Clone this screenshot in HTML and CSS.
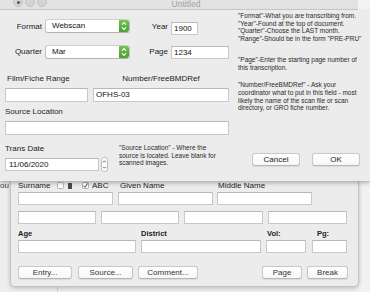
FILE: index.html
```html
<!DOCTYPE html>
<html>
<head>
<meta charset="utf-8">
<title>Untitled</title>
<link rel="stylesheet" href="styles.css">
</head>
<body>
<div class="screen">
  <div class="topbar">
    <div class="titlebar">
      <div class="lights">
        <span class="light"><span class="dot"></span></span>
        <span class="light"></span>
        <span class="light"></span>
      </div>
      <div class="title">Untitled</div>
    </div>
    <div class="topgap"></div>
  </div>

  <div class="sheet">
    <div class="sheet-top">
      <div class="form">
        <div class="row row-a">
          <span class="lbl lbl-r w42">Format</span>
          <div class="popup">
            <span class="popup-text">Webscan</span>
            <span class="popup-btn"><svg width="10" height="14" viewBox="0 0 10 14"><path d="M3 5.6 L5 3.6 L7 5.6 M3 8.4 L5 10.4 L7 8.4" fill="none" stroke="#fff" stroke-width="1.1"/></svg></span>
          </div>
          <span class="lbl lbl-r w38">Year</span>
          <div class="field f-year">1900</div>
        </div>
        <div class="row row-b">
          <span class="lbl lbl-r w42">Quarter</span>
          <div class="popup">
            <span class="popup-text">Mar</span>
            <span class="popup-btn"><svg width="10" height="14" viewBox="0 0 10 14"><path d="M3 5.6 L5 3.6 L7 5.6 M3 8.4 L5 10.4 L7 8.4" fill="none" stroke="#fff" stroke-width="1.1"/></svg></span>
          </div>
          <span class="lbl lbl-r w38">Page</span>
          <div class="field f-page">1234</div>
        </div>
        <div class="row row-clabels">
          <span class="lbl c-film">Film/Fiche Range</span>
          <span class="lbl c-num">Number/FreeBMDRef</span>
        </div>
        <div class="row row-cfields">
          <div class="field f-film"></div>
          <div class="field f-num">OFHS-03</div>
        </div>
        <div class="row row-dlabel">
          <span class="lbl">Source Location</span>
        </div>
        <div class="row row-dfield">
          <div class="field f-source"></div>
        </div>
      </div>
      <div class="help">
        <p class="help-p">"Format"-What you are transcribing from.<br>"Year"-Found at the top of document.<br>"Quarter"-Choose the LAST month.<br>"Range"-Should be in the form "PRE-PRU"</p>
        <p class="help-p help-p2">"Page"-Enter the starting page number of<br>this transcription.</p>
        <p class="help-p help-p3">"Number/FreeBMDRef" - Ask your<br>coordinator what to put in this field - most<br>likely the name of the scan file or scan<br>directory, or GRO fiche number.</p>
      </div>
    </div>
    <div class="sheet-bottom">
      <div class="date-block">
        <div class="lbl date-lbl">Trans Date</div>
        <div class="date-row">
          <div class="field f-date">11/06/2020</div>
          <div class="stepper"><svg width="7" height="15" viewBox="0 0 7 15"><path d="M2 5.3 L3.5 3.8 L5 5.3 M2 9.7 L3.5 11.2 L5 9.7" fill="none" stroke="#555" stroke-width="0.9"/></svg></div>
        </div>
      </div>
      <p class="help2">"Source Location" - Where the<br>source is located. Leave blank for<br>scanned images.</p>
      <div class="sheet-buttons">
        <button class="btn btn-sheet">Cancel</button>
        <button class="btn btn-sheet">OK</button>
      </div>
    </div>
  </div>

  <div class="lower">
    <div class="back-left"><span class="back-label">ou</span></div>
    <div class="panel">
      <div class="prow prow-names">
        <div class="pcell w95 surname-cell">
          <span class="plbl">Surname</span>
          <span class="cb cb1"></span>
          <span class="sq"></span>
          <span class="cb cb2"><svg width="7" height="7" viewBox="0 0 7 7"><path d="M1.3 3.7 L2.9 5.3 L5.8 1.3" fill="none" stroke="#333" stroke-width="0.9"/></svg></span>
          <span class="plbl abc">ABC</span>
        </div>
        <div class="pcell w95"><span class="plbl given">Given Name</span></div>
        <div class="pcell w95"><span class="plbl middle">Middle Name</span></div>
      </div>
      <div class="prow prow-f1">
        <div class="field pf w95"></div>
        <div class="field pf w95"></div>
        <div class="field pf w95"></div>
      </div>
      <div class="prow prow-f2">
        <div class="field pf w78"></div>
        <div class="field pf w78"></div>
        <div class="field pf w79"></div>
        <div class="field pf w79"></div>
      </div>
      <div class="prow prow-f3">
        <div class="pcol col-age"><span class="blbl">Age</span><div class="field pf"></div></div>
        <div class="pcol col-district"><span class="blbl">District</span><div class="field pf"></div></div>
        <div class="pcol col-vol"><span class="blbl vol-l">Vol:</span><div class="field pf"></div></div>
        <div class="pcol col-pg"><span class="blbl pg-l">Pg:</span><div class="field pf"></div></div>
      </div>
      <div class="prow prow-btns">
        <button class="btn pbtn w54">Entry...</button>
        <button class="btn pbtn w55">Source...</button>
        <button class="btn pbtn w60">Comment...</button>
        <span class="spacer"></span>
        <button class="btn pbtn w40">Page</button>
        <button class="btn pbtn w41">Break</button>
      </div>
    </div>
    <div class="back-right"></div>
  </div>
</div>
</body>
</html>
```

FILE: styles.css
```css
* { box-sizing: border-box; }

html, body {
  margin: 0;
  padding: 0;
}

body {
  width: 370px;
  height: 292px;
  overflow: hidden;
  font-family: "Liberation Sans", Arial, sans-serif;
  font-size: 8px;
  color: #1c1c1c;
  background: #efefef;
}

.screen {
  width: 370px;
  height: 292px;
  display: flex;
  flex-direction: column;
  overflow: hidden;
  background:
    linear-gradient(to right, transparent 57px, #d2d2d2 57px, #d2d2d2 58px, transparent 58px),
    #eeeeee;
}

/* ---------- top window title bar ---------- */
.topbar {
  display: flex;
  height: 10px;
  flex-shrink: 0;
}

.titlebar {
  width: 358px;
  height: 10px;
  display: flex;
  background: #e3e3e3;
  border-bottom: 1px solid #cdcdcd;
  overflow: hidden;
}

.lights {
  display: flex;
  gap: 2px;
  padding-left: 13px;
  align-items: flex-start;
}

.light {
  width: 10px;
  height: 10px;
  margin-top: -3px;
  border-radius: 50%;
  background: #d3d3d3;
  border: 1px solid #c2c2c2;
  display: flex;
  align-items: center;
  justify-content: center;
}

.dot {
  width: 3px;
  height: 3px;
  border-radius: 50%;
  background: #555;
}

.title {
  flex: 1;
  text-align: center;
  padding-right: 33px;
  font-size: 8.5px;
  line-height: 9px;
  color: #a2a2a2;
}

.topgap {
  flex: 1;
  background: #f4f4f4;
}

/* ---------- sheet ---------- */
.sheet {
  height: 171px;
  flex-shrink: 0;
  background: #ececec;
  box-shadow: 0 2px 4px rgba(0, 0, 0, 0.28);
  position: relative;
  z-index: 2;
  display: flex;
  flex-direction: column;
}

.sheet-top {
  display: flex;
  height: 125px;
}

.form {
  width: 238px;
  padding-left: 5px;
  flex-shrink: 0;
}

.row {
  display: flex;
}

.lbl {
  font-size: 8px;
  line-height: 10px;
  color: #1c1c1c;
  white-space: nowrap;
}

.lbl-r { text-align: right; }
.w42 { width: 37px; margin-right: 3px; }
.w38 { width: 38px; margin-right: 3px; }

.row-a {
  height: 16px;
  margin-top: 9px;
}

.row-a .lbl { align-self: center; }
.row-a .popup { align-self: flex-start; }
.row-a .field { align-self: flex-end; }

.row-b {
  height: 14px;
  margin-top: 10px;
  align-items: center;
}

.popup {
  width: 85px;
  height: 14px;
  display: flex;
  background: #fff;
  border: 1px solid #c2c2c2;
  border-top-color: #cfcfcf;
  border-bottom-color: #b3b3b3;
  border-radius: 3px;
  overflow: hidden;
}

.popup-text {
  flex: 1;
  padding-left: 6px;
  line-height: 12px;
  font-size: 8px;
  color: #111;
}

.popup-btn {
  width: 10px;
  display: flex;
  align-items: center;
  justify-content: center;
  background: linear-gradient(#72c451, #4f9f30);
  border-radius: 0 2px 2px 0;
}

.popup-btn svg { display: block; }

.field {
  height: 14px;
  background: #fff;
  border: 1px solid #c8c8c8;
  border-top-color: #b8b8b8;
  font-size: 8px;
  line-height: 12px;
  padding-left: 2px;
  color: #111;
  white-space: nowrap;
}

.f-year { width: 27px; height: 13px; line-height: 11px; }
.f-page { width: 58px; height: 13px; line-height: 11px; }

.row-clabels {
  margin-top: 15px;
  height: 10px;
}

.c-film { width: 83px; padding-left: 2px; }
.c-num { width: 136px; margin-left: 5px; text-align: center; }

.row-cfields {
  margin-top: 4px;
  gap: 5px;
}

.f-film { width: 83px; }
.f-num { width: 136px; }

.row-dlabel {
  margin-top: 5px;
  height: 10px;
}

.row-dfield { margin-top: 4px; }
.f-source { width: 224px; }

.help {
  padding-top: 2px;
  font-size: 6.5px;
  line-height: 7.7px;
  color: #2a2a2a;
  white-space: nowrap;
}

.help-p { margin: 0; }
.help-p2 { margin-top: 13px; }
.help-p3 { margin-top: 10px; }

.sheet-bottom {
  display: flex;
  flex: 1;
}

.date-block {
  padding-left: 5px;
}

.date-lbl {
  margin-top: 9px;
  height: 10px;
}

.date-row {
  margin-top: 3px;
  height: 15px;
  display: flex;
  align-items: center;
}

.f-date {
  width: 94px;
  height: 13px;
  line-height: 11px;
  padding-left: 3px;
}

.stepper {
  width: 7px;
  height: 15px;
  margin-left: 2px;
  background: #fff;
  border: 1px solid #bdbdbd;
  border-radius: 3px;
  display: flex;
  align-items: center;
  justify-content: center;
  overflow: hidden;
}

.stepper svg { display: block; flex-shrink: 0; }

.help2 {
  margin: 9.4px 0 0 11px;
  font-size: 6.5px;
  line-height: 7.3px;
  color: #2a2a2a;
  white-space: nowrap;
}

.sheet-buttons {
  margin-left: auto;
  margin-right: 10px;
  margin-top: 18px;
  display: flex;
  gap: 12px;
  align-items: flex-start;
}

.btn {
  font-family: "Liberation Sans", Arial, sans-serif;
  font-size: 8px;
  color: #222;
  height: 13px;
  padding: 0;
  line-height: 11px;
  background: linear-gradient(#ffffff, #f7f7f7);
  border: 1px solid #c9c9c9;
  border-bottom-color: #b6b6b6;
  border-radius: 3px;
  box-shadow: 0 0.5px 1px rgba(0, 0, 0, 0.08);
  text-align: center;
}

.btn-sheet { width: 48px; }

/* ---------- lower window ---------- */
.lower {
  display: flex;
  flex: 1;
}

.back-left {
  width: 10px;
  flex-shrink: 0;
  text-align: right;
  padding-right: 1px;
  overflow: hidden;
}

.back-label {
  font-size: 8px;
  line-height: 9px;
  color: #3a3a3a;
}

.panel {
  width: 349px;
  height: 106px;
  flex-shrink: 0;
  background: #ececec;
  border: 1px solid #c3c3c3;
  border-top: none;
  border-radius: 0 0 5px 5px;
  box-shadow: 0 1px 4px rgba(0, 0, 0, 0.22);
  padding: 0 10px 0 7px;
  position: relative;
  z-index: 1;
}

.back-right {
  flex: 1;
  background: #f2f2f2;
}

.prow { display: flex; }

.prow-names {
  height: 9px;
  align-items: center;
}

.pcell {
  display: flex;
  align-items: center;
  height: 9px;
}

.w95 { width: 95px; }
.w78 { width: 78px; }
.w79 { width: 79px; }

.prow-names .pcell:nth-child(2) { margin-left: 5px; }
.prow-names .pcell:nth-child(3) { margin-left: 4px; }

.plbl {
  font-size: 8px;
  line-height: 9px;
  color: #1c1c1c;
  white-space: nowrap;
}

.cb {
  width: 7px;
  height: 7px;
  background: #fff;
  border: 1px solid #b2b2b2;
  border-radius: 1.5px;
  display: flex;
  align-items: center;
  justify-content: center;
}

.cb svg { display: block; flex-shrink: 0; }

.cb1 { margin-left: 6.5px; }

.sq {
  width: 4.5px;
  height: 6px;
  margin-left: 4px;
  background: #4a4a4a;
  border-radius: 0.5px;
}

.cb2 { margin-left: 9.5px; }
.abc { margin-left: 3px; }
.given { margin-left: 2px; }
.middle { margin-left: 1px; }

.pf { height: 13px; }

.prow-f1 {
  margin-top: 2px;
}
.prow-f1 .field:nth-child(2) { margin-left: 5px; }
.prow-f1 .field:nth-child(3) { margin-left: 4px; }

.prow-f2 {
  margin-top: 6px;
  gap: 5px;
}

.prow-f3 {
  margin-top: 5px;
  gap: 5px;
}

.pcol {
  display: flex;
  flex-direction: column;
}

.col-age { width: 118px; }
.col-district { width: 120px; }
.col-vol { width: 40px; }
.col-pg { width: 35px; margin-left: 1px; }

.blbl {
  font-size: 7.5px;
  font-weight: bold;
  line-height: 10px;
  height: 11px;
  color: #1c1c1c;
  white-space: nowrap;
}

.vol-l { padding-left: 1px; }
.pg-l { padding-left: 5px; }

.prow-f3 .pf { height: 13px; }

.prow-btns {
  margin-top: 13px;
  gap: 5px;
}

.pbtn { color: #333; }
.w54 { width: 54px; }
.w55 { width: 55px; margin-left: 1px; }
.w60 { width: 60px; }
.w40 { width: 40px; }
.w41 { width: 41px; }

.spacer { flex: 1; }
```
